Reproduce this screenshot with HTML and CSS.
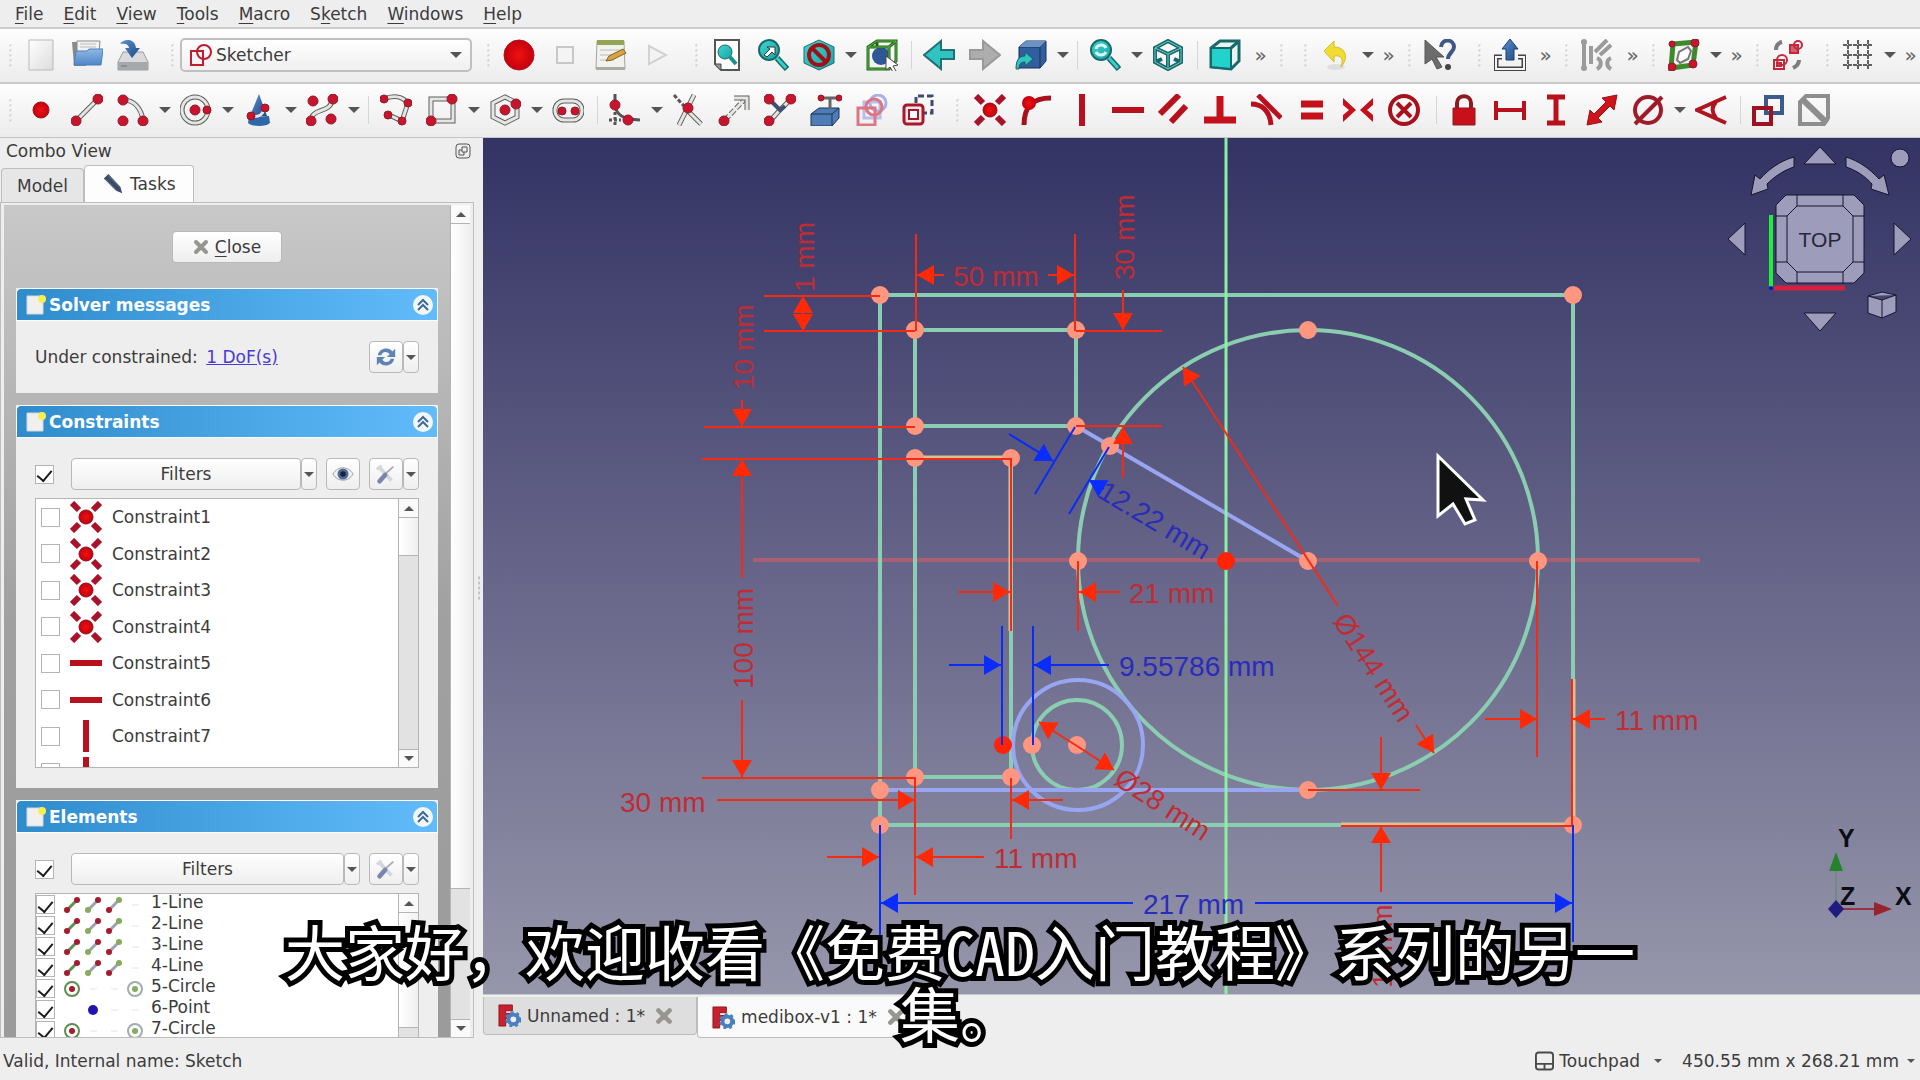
FILE: index.html
```html
<!DOCTYPE html>
<html lang="en">
<head>
    <meta charset="UTF-8">
    <meta name="viewport" content="width=device-width, initial-scale=1.0">
    <title>medibox-v1 - FreeCAD</title>
    <link rel="stylesheet" href="styles.css">
</head>
<body>
    <!-- shared icons -->
    <svg class="defs" width="0" height="0" aria-hidden="true">
        <defs>
            <linearGradient id="g-page" x1="0" y1="0" x2="1" y2="1"><stop offset="0" stop-color="#fff"/><stop offset="1" stop-color="#dcdcdc"/></linearGradient>
            <linearGradient id="g-folder" x1="0" y1="0" x2="0" y2="1"><stop offset="0" stop-color="#8fb9e6"/><stop offset="1" stop-color="#4f86c6"/></linearGradient>
            <linearGradient id="g-blue" x1="0" y1="0" x2="1" y2="1"><stop offset="0" stop-color="#5c8fd0"/><stop offset="1" stop-color="#1f4a86"/></linearGradient>
            <radialGradient id="g-red"><stop offset="0" stop-color="#ee1111"/><stop offset="1" stop-color="#c4000c"/></radialGradient>
            <linearGradient id="g-teal" x1="0" y1="0" x2="1" y2="1"><stop offset="0" stop-color="#3ed6d2"/><stop offset="1" stop-color="#1ba3a3"/></linearGradient>
            <symbol id="i-coincident" viewBox="0 0 32 32">
                <path d="M2 2l7 7M30 2l-7 7M2 30l7-7M30 30l-7-7" stroke="#a91228" stroke-width="6"/>
                <circle cx="16" cy="16" r="7" fill="url(#g-red)" stroke="#8c0f1c"/>
            </symbol>
            <symbol id="i-horizontal" viewBox="0 0 32 32"><path d="M0 16h32" stroke="#b8101c" stroke-width="6"/></symbol>
            <symbol id="i-vertical" viewBox="0 0 32 32"><path d="M16 0v32" stroke="#b8101c" stroke-width="6"/></symbol>
            <symbol id="i-line-edge" viewBox="0 0 16 16"><path d="M3 13L13 3" stroke="#5f8f52" stroke-width="3"/><circle class="r" cx="3" cy="13" r="3"/><circle class="r" cx="13" cy="3" r="3"/></symbol>
            <symbol id="i-line-start" viewBox="0 0 16 16"><path d="M3 13L13 3" stroke="#9aa3b0" stroke-width="3"/><circle class="g" cx="3" cy="13" r="3"/><circle class="r" cx="13" cy="3" r="3"/></symbol>
            <symbol id="i-line-end" viewBox="0 0 16 16"><path d="M3 13L13 3" stroke="#9aa3b0" stroke-width="3"/><circle class="r" cx="3" cy="13" r="3"/><circle class="g" cx="13" cy="3" r="3"/></symbol>
            <symbol id="i-circle-edge" viewBox="0 0 16 16"><circle cx="8" cy="8" r="7" fill="none" stroke="#5d8f50" stroke-width="2"/><circle class="r" cx="8" cy="8" r="3"/></symbol>
            <symbol id="i-circle-mid" viewBox="0 0 16 16"><circle cx="8" cy="8" r="7" fill="none" stroke="#a3acae" stroke-width="2"/><circle class="g" cx="8" cy="8" r="3"/></symbol>
            <symbol id="i-point" viewBox="0 0 16 16"><circle cx="8" cy="8" r="5" fill="#2015ae"/></symbol>
            <symbol id="i-dash" viewBox="0 0 16 16"><path d="M5 8h7" stroke="#e4e4e4"/></symbol>
            <symbol id="i-task" viewBox="0 0 20 20"><path d="M1 1h16v18H1z" fill="#f1f0ee" stroke="#cfd8dc"/><circle cx="16" cy="4" r="4" fill="#f6ee52"/></symbol>
            <symbol id="i-fold" viewBox="0 0 20 20"><circle cx="10" cy="10" r="10" fill="#f2f7fc"/><path d="M5 10l5-5 5 5M5 15l5-5 5 5" fill="none" stroke="#3f6a97" stroke-width="2"/></symbol>
            <symbol id="i-tools" viewBox="0 0 24 24"><path d="M4 4l14 15" stroke="#d3d6dc" stroke-width="4"/><path d="M20 4L10 13" stroke="#a5a9b1" stroke-width="2"/><path d="M11 13L5 20" stroke="#7885ae" stroke-width="5" stroke-linecap="round"/><path d="M2 7l5-4" stroke="#d3d6dc" stroke-width="3"/></symbol>
            <symbol id="i-x" viewBox="0 0 16 16"><path d="M3 3l10 10M13 3L3 13" stroke="#96968f" stroke-width="4" stroke-linecap="round"/></symbol>
            <symbol id="i-freecad" viewBox="0 0 24 24"><path d="M1 1h14v6H8v3h5v5H8v8H1z" fill="#c8202c" stroke="#8e1820"/><circle cx="16" cy="16" r="5" fill="#eeeeee" stroke="#4a80bf" stroke-width="4"/><circle cx="16" cy="16" r="7" fill="none" stroke="#4a80bf" stroke-width="3" stroke-dasharray="3 3"/></symbol>
            <marker id="m-red" viewBox="0 0 17 20" refX="17" refY="10" markerWidth="17" markerHeight="20" markerUnits="userSpaceOnUse" orient="auto"><path d="M0 0l17 10L0 20z" fill="#ff2a05"/></marker>
            <marker id="m-blue" viewBox="0 0 17 20" refX="17" refY="10" markerWidth="17" markerHeight="20" markerUnits="userSpaceOnUse" orient="auto"><path d="M0 0l17 10L0 20z" fill="#0a2cff"/></marker>
        </defs>
    </svg>

    <nav class="menu-bar">
        <button><u>F</u>ile</button>
        <button><u>E</u>dit</button>
        <button><u>V</u>iew</button>
        <button><u>T</u>ools</button>
        <button><u>M</u>acro</button>
        <button>S<u>k</u>etch</button>
        <button><u>W</u>indows</button>
        <button><u>H</u>elp</button>
    </nav>

    <div class="toolbar">
        <span class="grip"></span>
        <button class="tool" aria-label="New"><svg viewBox="0 0 32 32"><path d="M4 1h24v30H4z" fill="url(#g-page)" stroke="#b9b9b9"/></svg></button>
        <button class="tool" aria-label="Open"><svg viewBox="0 0 32 32"><path d="M1 3h12l2 3v21H3z" fill="#8a8a88"/><path d="M6 2h23l-1 14H6z" fill="#f2f2f2" stroke="#8a8a8a"/><path d="M9 5h16M9 8h16" stroke="#bbb"/><path d="M5 12h11l2-2h14l-2 16H3z" fill="url(#g-folder)" stroke="#4a7fbe"/></svg></button>
        <button class="tool" aria-label="Save"><svg viewBox="0 0 32 32"><path d="M6 13h20l5 10v8H1v-8z" fill="#d9dadc" stroke="#9a9b9d"/><path d="M1 23h30v8H1z" fill="#a6a8ac"/><path d="M4 27h6" stroke="#777"/><path d="M3 5c4-6 15-6 16 4h4l-8 10-7-10h4c0-4-5-5-9-4z" fill="url(#g-blue)"/></svg></button>
        <span class="gap"></span>
        <span class="grip"></span>
        <label class="workbench">
            <svg viewBox="0 0 24 24"><circle cx="15" cy="9" r="7"/><path d="M2 8h12v14H2z"/></svg>
            <select aria-label="Workbench"><option>Sketcher</option></select>
            <i class="caret"></i>
        </label>
        <span class="gap"></span>
        <span class="grip"></span>
        <button class="tool" aria-label="Record macro"><svg viewBox="0 0 32 32"><circle cx="16" cy="16" r="15" fill="url(#g-red)" stroke="#b3131b"/></svg></button>
        <button class="tool" aria-label="Stop"><svg viewBox="0 0 32 32"><path d="M8 8h16v16H8z" fill="#f4f4f4" stroke="#c8c8c8" stroke-width="2"/></svg></button>
        <button class="tool" aria-label="Macros"><svg viewBox="0 0 32 32"><path d="M2 2h27l1 28H1z" fill="#f1f1ee" stroke="#a5a5a0"/><path d="M2 1h27v5H2z" fill="#94a354"/><path d="M5 11h20M5 16h18M5 21h14" stroke="#bcbcbc"/><path d="M1 28h29v3H1z" fill="#aaa"/><path d="M11 22l3-5 14-7 3 4-14 7z" fill="#d9a441" stroke="#80602a"/></svg></button>
        <button class="tool" aria-label="Run macro"><svg viewBox="0 0 32 32"><path d="M8 7l17 9L8 25z" fill="#f3f3f3" stroke="#d2d2d2" stroke-width="2"/></svg></button>
        <span class="gap"></span>
        <span class="grip"></span>
        <button class="tool" aria-label="Fit all"><svg viewBox="0 0 32 32"><path d="M4 1h24v30H10l-6-6z" fill="#fff" stroke="#555" stroke-width="2"/><path d="M4 25h6v6" fill="#999" stroke="#444"/><circle cx="14" cy="13" r="7" fill="url(#g-teal)" stroke="#17696b"/><path d="M19 18l6 7" stroke="#1c8f90" stroke-width="4"/></svg></button>
        <button class="tool" aria-label="Fit selection"><svg viewBox="0 0 32 32"><circle cx="12" cy="11" r="10" fill="url(#g-teal)" stroke="#17696b" stroke-width="2"/><path d="M20 19l10 11" stroke="#17696b" stroke-width="6"/><path d="M20 19l9 10" stroke="#35cfca" stroke-width="3"/><path d="M7 16l6-6-3-2h8v8l-3-3-5 5z" fill="#fff" stroke="#333"/></svg></button>
        <button class="tool" aria-label="Draw style"><svg viewBox="0 0 32 32"><path d="M16 1l15 7v16l-15 7-15-7V8z" fill="url(#g-teal)" stroke="#1d6d6f"/><circle cx="16" cy="16" r="10" fill="none" stroke="#a01018" stroke-width="4"/><path d="M9 9l14 14" stroke="#a01018" stroke-width="4"/></svg></button>
        <button class="more" aria-label="More"><i class="caret"></i></button>
        <button class="tool" aria-label="Bounding box"><svg viewBox="0 0 32 32"><circle cx="15" cy="17" r="9" fill="#2f5697"/><path d="M2 8l9-6h19v20l-7 8H2zM2 8h21l7-6M23 8v22M11 2v5" fill="none" stroke="#24691b" stroke-width="3"/><path d="M2 8l9-6h19v20l-7 8H2zM2 8h21l7-6M23 8v22" fill="none" stroke="#5fb548" stroke-width="1"/><path d="M20 17l12 9-5 1 3 5-3 1-3-5-4 3z" fill="#fff" stroke="#444"/></svg></button>
        <span class="sep"></span>
        <button class="tool" aria-label="Back"><svg viewBox="0 0 32 32"><path d="M1 16L18 2v9h13v9H18v10z" fill="#2fc4c2" stroke="#256f73" stroke-width="2"/></svg></button>
        <button class="tool" aria-label="Forward"><svg viewBox="0 0 32 32"><path d="M31 16L14 2v9H1v9h13v10z" fill="#adadad" stroke="#999" stroke-width="2"/></svg></button>
        <button class="tool" aria-label="Linked object"><svg viewBox="0 0 32 32"><path d="M4 8l7-6h20v20l-6 7H4z" fill="#2f5f9f" stroke="#1d2f50"/><path d="M4 8h21l6-6M25 8v21" fill="none" stroke="#1d2f50"/><path d="M11 2h20l-6 6H4z" fill="#6b92c6"/><path d="M1 30c0-9 3-13 9-13v-4l8 7-8 7v-4c-4 0-6 2-6 7z" fill="#2fc4c2" stroke="#1c5f63"/></svg></button>
        <button class="more" aria-label="More"><i class="caret"></i></button>
        <span class="sep"></span>
        <button class="tool" aria-label="Zoom"><svg viewBox="0 0 32 32"><circle cx="12" cy="11" r="10" fill="url(#g-teal)" stroke="#17696b" stroke-width="2"/><path d="M20 19l10 11" stroke="#17696b" stroke-width="6"/><path d="M20 19l9 10" stroke="#35cfca" stroke-width="3"/><path d="M7 10c1-5 8-5 10-1M17 13c-2 4-8 4-10 0" fill="none" stroke="#d9f5f4" stroke-width="3"/></svg></button>
        <button class="more" aria-label="More"><i class="caret"></i></button>
        <button class="tool" aria-label="Isometric"><svg viewBox="0 0 32 32"><path d="M16 2l13 7v14l-13 7-13-7V9zM3 9l13 6 13-6M16 15v15M3 23l7-3M29 23l-7-3" fill="none" stroke="#17696b" stroke-width="4"/><path d="M16 2l13 7v14l-13 7-13-7V9zM3 9l13 6 13-6M16 15v15" fill="none" stroke="#6fc9c4" stroke-width="1"/></svg></button>
        <span class="sep"></span>
        <button class="tool" aria-label="Front"><svg viewBox="0 0 32 32"><path d="M2 9l9-7h19v20l-8 8-20-2z" fill="#e9f4f3" stroke="#17696b" stroke-width="3"/><path d="M2 9h20v21L2 28z" fill="#22d3cc" stroke="#17696b" stroke-width="2"/><path d="M22 9l8-7" stroke="#17696b" stroke-width="3"/></svg></button>
        <button class="ext" aria-label="More tools">»</button>
        <span class="grip"></span>
        <span class="gap"></span>
        <span class="grip"></span>
        <button class="tool" aria-label="Undo"><svg viewBox="0 0 32 32"><ellipse cx="16" cy="28" rx="9" ry="3" fill="#dedede"/><path d="M4 12L14 2v6c12 0 15 11 7 20 3-9 0-12-7-11v6z" fill="#f1dc32" stroke="#d3bd28"/></svg></button>
        <button class="more" aria-label="More"><i class="caret"></i></button>
        <button class="ext" aria-label="More tools">»</button>
        <span class="grip"></span>
        <button class="tool" aria-label="What's this"><svg viewBox="0 0 32 32"><path d="M1 1l19 17h-8l6 10-5 2-5-10-7 5z" fill="#6c6c6c" stroke="#555"/><path d="M17 8c1-9 13-8 13 0 0 5-6 6-6 12" fill="none" stroke="#3e5688" stroke-width="4"/><circle cx="24" cy="28" r="3" fill="#444"/></svg></button>
        <span class="gap"></span>
        <span class="grip"></span>
        <button class="tool" aria-label="Leave sketch"><svg viewBox="0 0 32 32"><path d="M8 18H2v12h28V18h-6" fill="none" stroke="#444" stroke-width="5"/><path d="M8 18H2v12h28V18h-6" fill="none" stroke="#f4f4f4" stroke-width="2"/><path d="M16 0l8 10h-4v11h-8V10H8z" fill="url(#g-blue)" stroke="#1d3f70"/></svg></button>
        <button class="ext" aria-label="More tools">»</button>
        <span class="grip"></span>
        <button class="tool" aria-label="Constraints"><svg viewBox="0 0 32 32"><g stroke="#9b9b9b" fill="none"><path d="M3 3v26" stroke-width="4"/><path d="M10 7v18" stroke-width="4"/><path d="M14 13L26 1M19 16L30 6M16 19c5 2 5 8 0 11M30 19c-5 2-5 8 0 11" stroke-width="4"/></g><circle cx="3" cy="3" r="3" fill="#9b9b9b"/><circle cx="3" cy="29" r="3" fill="#9b9b9b"/></svg></button>
        <button class="ext" aria-label="More tools">»</button>
        <span class="grip"></span>
        <button class="tool" aria-label="View section"><svg viewBox="0 0 32 32"><path d="M5 5l23-2-3 23-22 3z" fill="#f3f3f3" stroke="#3c8a2a" stroke-width="5"/><path d="M9 21l2-8 9-5 3 4-3 8-8 4z" fill="#fff" stroke="#777" stroke-width="2"/><g class="node"><circle cx="4" cy="5" r="3"/><circle cx="27" cy="4" r="4"/><circle cx="25" cy="25" r="4"/><circle cx="4" cy="28" r="4"/></g></svg></button>
        <button class="more" aria-label="More"><i class="caret"></i></button>
        <button class="ext" aria-label="More tools">»</button>
        <span class="grip"></span>
        <button class="tool" aria-label="Swap geometry"><svg viewBox="0 0 32 32"><g fill="none" stroke="#c5283c" stroke-width="2"><path d="M18 6h8v8h-8z" fill="#d8606e"/><circle cx="26" cy="6" r="4"/><path d="M2 21h10v9H2zM5 24h4v3H5z"/><circle cx="10" cy="21" r="5"/></g><path d="M4 11c0-4 2-7 6-8M27 21c0 4-2 6-6 8" fill="none" stroke="#7d7d7d" stroke-width="4"/></svg></button>
        <span class="gap"></span>
        <span class="grip"></span>
        <button class="tool" aria-label="Grid"><svg viewBox="0 0 32 32"><path d="M6 1v30M16 1v30M26 1v30M1 6h30M1 16h30M1 26h30" stroke="#606060" stroke-width="2" stroke-dasharray="4 1"/></svg></button>
        <button class="more" aria-label="More"><i class="caret"></i></button>
        <button class="ext" aria-label="More tools">»</button>
    </div>

    <div class="toolbar">
        <span class="grip"></span>
        <button class="tool" aria-label="Point"><svg viewBox="0 0 32 32"><circle cx="16" cy="16" r="8" fill="url(#g-red)" stroke="#a5121c"/></svg></button>
        <button class="tool" aria-label="Line"><svg viewBox="0 0 32 32"><path class="pipe" d="M5 27L27 5"/><path class="core" d="M5 27L27 5"/><g class="node"><circle cx="5" cy="27" r="5"/><circle cx="27" cy="5" r="5"/></g></svg></button>
        <button class="tool" aria-label="Arc"><svg viewBox="0 0 32 32"><path class="pipe" d="M6 6c11 0 18 8 20 20"/><path class="core" d="M6 6c11 0 18 8 20 20"/><g class="node"><circle cx="6" cy="6" r="5"/><circle cx="6" cy="27" r="5"/><circle cx="26" cy="27" r="5"/></g></svg></button>
        <button class="more" aria-label="More"><i class="caret"></i></button>
        <button class="tool" aria-label="Circle"><svg viewBox="0 0 32 32"><circle class="pipe" cx="15" cy="16" r="13"/><circle class="core" cx="15" cy="16" r="13"/><g class="node"><circle cx="15" cy="16" r="5"/><circle cx="27" cy="16" r="4"/></g></svg></button>
        <button class="more" aria-label="More"><i class="caret"></i></button>
        <button class="tool" aria-label="Conic"><svg viewBox="0 0 32 32"><path d="M16 0l8 22H7z" fill="url(#g-blue)"/><path d="M6 23l20-1 1 7c-4 4-18 4-22 0z" fill="#2d68a8"/><path d="M8 22c8 2 13-2 13-9" fill="none" stroke="#e6e6e6" stroke-width="3"/><g class="node"><circle cx="8" cy="22" r="4"/><circle cx="22" cy="14" r="4"/></g></svg></button>
        <button class="more" aria-label="More"><i class="caret"></i></button>
        <button class="tool" aria-label="B-spline"><svg viewBox="0 0 32 32"><path class="pipe" d="M5 27c0-14 21-7 21-22"/><path class="core" d="M5 27c0-14 21-7 21-22"/><g class="node"><circle cx="5" cy="27" r="5"/><circle cx="7" cy="7" r="5"/><circle cx="27" cy="5" r="5"/><circle cx="25" cy="25" r="5"/></g></svg></button>
        <button class="more" aria-label="More"><i class="caret"></i></button>
        <span class="sep"></span>
        <button class="tool" aria-label="Polyline"><svg viewBox="0 0 32 32"><path class="pipe" d="M4 5c9-4 18-3 24 4l-6 18-13-6"/><path class="core" d="M4 5c9-4 18-3 24 4l-6 18-13-6"/><g class="node"><circle cx="4" cy="5" r="4"/><circle cx="28" cy="9" r="4"/><circle cx="22" cy="27" r="4"/><circle cx="8" cy="21" r="4"/></g></svg></button>
        <button class="tool" aria-label="Rectangle"><svg viewBox="0 0 32 32"><path class="pipe" d="M5 5h22v22H5z"/><path class="core" d="M5 5h22v22H5z"/><g class="node"><circle cx="26" cy="5" r="5"/><circle cx="5" cy="27" r="5"/></g></svg></button>
        <button class="more" aria-label="More"><i class="caret"></i></button>
        <button class="tool" aria-label="Polygon"><svg viewBox="0 0 32 32"><path class="pipe" d="M16 3l12 6v14l-12 6-12-6V9z"/><path class="core" d="M16 3l12 6v14l-12 6-12-6V9z"/><g class="node"><circle cx="16" cy="16" r="5"/><circle cx="27" cy="10" r="5"/></g></svg></button>
        <button class="more" aria-label="More"><i class="caret"></i></button>
        <button class="tool" aria-label="Slot"><svg viewBox="0 0 32 32"><rect class="pipe" x="3" y="7" width="27" height="19" rx="9"/><rect class="core" x="3" y="7" width="27" height="19" rx="9"/><g class="node"><circle cx="10" cy="17" r="4"/><circle cx="23" cy="17" r="4"/></g></svg></button>
        <span class="sep"></span>
        <button class="tool" aria-label="Fillet"><svg viewBox="0 0 32 32"><path d="M6 0v12c2 9 7 13 25 14" fill="none" stroke="#555" stroke-width="3"/><path d="M6 18v13M0 26h12" stroke="#555" stroke-width="3" stroke-dasharray="3 2"/><g class="node"><circle cx="6" cy="11" r="5"/><circle cx="19" cy="26" r="5"/></g></svg></button>
        <button class="more" aria-label="More"><i class="caret"></i></button>
        <button class="tool" aria-label="Trim"><svg viewBox="0 0 32 32"><path class="pipe" d="M22 1L7 31M15 16l14 14"/><path class="core" d="M22 1L7 31M15 16l14 14"/><path d="M2 1l10 11" stroke="#555" stroke-width="3" stroke-dasharray="4 2"/><circle class="node" cx="16" cy="14" r="5"/></svg></button>
        <button class="tool" aria-label="Extend"><svg viewBox="0 0 32 32"><path d="M7 26L26 6" stroke="#666" stroke-width="5" stroke-dasharray="6 2"/><path class="core" d="M7 26L26 6"/><path class="pipe" d="M16 4h13v12"/><path class="core" d="M16 4h13v12"/><circle class="node" cx="6" cy="27" r="5"/></svg></button>
        <button class="tool" aria-label="Split"><svg viewBox="0 0 32 32"><path class="pipe" d="M6 27l9-10L27 5"/><path class="core" d="M6 27l9-10L27 5"/><path d="M6 6l10 10 5-4" fill="none" stroke="#405070" stroke-width="4"/><g class="node"><circle cx="5" cy="5" r="5"/><circle cx="27" cy="5" r="5"/><circle cx="5" cy="27" r="5"/></g></svg></button>
        <button class="tool" aria-label="External geometry"><svg viewBox="0 0 32 32"><path d="M1 20l8-6h20v10l-7 8H1z" fill="#4d7cb6" stroke="#1b3357"/><path d="M1 20h21l7-6M22 20v12" fill="none" stroke="#1b3357"/><path d="M10 4h20M20 4v11" stroke="#666" stroke-width="3"/><g class="node"><circle cx="11" cy="4" r="3"/><circle cx="29" cy="4" r="3"/></g></svg></button>
        <button class="tool" aria-label="Carbon copy"><svg viewBox="0 0 32 32"><g fill="none" stroke-width="3"><circle cx="22" cy="9" r="8" stroke="#aab0e8"/><path d="M8 8h16v16H8z" stroke="#b9bdec"/><circle cx="18" cy="13" r="8" stroke="#dc7685"/><path d="M2 14h17v17H2z" stroke="#dc7685"/></g></svg></button>
        <button class="tool" aria-label="Construction geometry"><svg viewBox="0 0 32 32"><path d="M14 9V2h16v17h-9" fill="none" stroke="#3c4a70" stroke-width="3" stroke-dasharray="6 3"/><rect x="2" y="11" width="19" height="19" rx="3" fill="#f7e9e9" stroke="#a8182a" stroke-width="3"/><rect x="7" y="16" width="9" height="9" fill="#fff" stroke="#a8182a" stroke-width="2"/></svg></button>
        <span class="gap"></span>
        <span class="grip"></span>
        <div class="tool-group">
            <button class="tool" aria-label="Coincident"><svg><use href="#i-coincident"/></svg></button>
            <button class="tool" aria-label="Point on object"><svg viewBox="0 0 32 32"><path d="M4 31C4 13 12 4 31 4" fill="none" stroke="#a8101c" stroke-width="5"/><circle cx="9" cy="9" r="7" fill="url(#g-red)"/></svg></button>
            <button class="tool" aria-label="Vertical"><svg><use href="#i-vertical"/></svg></button>
            <button class="tool" aria-label="Horizontal"><svg><use href="#i-horizontal"/></svg></button>
            <button class="tool" aria-label="Parallel"><svg viewBox="0 0 32 32"><path d="M2 20L21 1M13 28l15-16" stroke="#b8101c" stroke-width="6"/></svg></button>
            <button class="tool" aria-label="Perpendicular"><svg viewBox="0 0 32 32"><path d="M16 2v24M0 26h32" stroke="#c4101a" stroke-width="7"/></svg></button>
            <button class="tool" aria-label="Tangent"><svg viewBox="0 0 32 32"><path d="M8 1l23 23M1 10c10 0 19 6 20 21" fill="none" stroke="#b8101c" stroke-width="5"/></svg></button>
            <button class="tool" aria-label="Equal"><svg viewBox="0 0 32 32"><path d="M5 10h22M5 22h22" stroke="#c4101a" stroke-width="7"/></svg></button>
            <button class="tool" aria-label="Symmetric"><svg viewBox="0 0 32 32"><path d="M1 4l13 12L1 28v-7l6-5-6-5zM31 4L18 16l13 12v-7l-6-5 6-5z" fill="#c4101a"/></svg></button>
            <button class="tool" aria-label="Block"><svg viewBox="0 0 32 32"><circle cx="16" cy="16" r="14" fill="none" stroke="#a8101c" stroke-width="4"/><path d="M9 9l14 14M23 9L9 23" stroke="#a8101c" stroke-width="4"/></svg></button>
        </div>
        <span class="sep"></span>
        <button class="tool" aria-label="Lock"><svg viewBox="0 0 32 32"><path d="M9 16V9c0-9 14-9 14 0v7" fill="none" stroke="#8e1b22" stroke-width="4"/><path d="M5 14h22v17H5z" fill="#c8101a" stroke="#8e1b22"/></svg></button>
        <button class="tool" aria-label="Horizontal distance"><svg viewBox="0 0 32 32"><path d="M2 7v19M30 7v19M2 16h28" stroke="#b8101c" stroke-width="4"/></svg></button>
        <button class="tool" aria-label="Vertical distance"><svg viewBox="0 0 32 32"><path d="M7 3h18M7 29h18M16 3v26" stroke="#b8101c" stroke-width="5"/></svg></button>
        <button class="tool" aria-label="Distance"><svg viewBox="0 0 32 32"><path d="M31 1l-3 15-4-4-12 12 4 4-15 3 3-15 4 4L20 8l-4-4z" fill="#d0121a" stroke="#98121a"/></svg></button>
        <button class="tool" aria-label="Diameter"><svg viewBox="0 0 32 32"><circle cx="16" cy="16" r="13" fill="none" stroke="#a01b28" stroke-width="4"/><path d="M3 30L30 3" stroke="#a01b28" stroke-width="4"/></svg></button>
        <button class="more" aria-label="More"><i class="caret"></i></button>
        <button class="tool" aria-label="Angle"><svg viewBox="0 0 32 32"><path d="M31 3L2 16l29 13M21 8c-5 5-4 11 0 16" fill="none" stroke="#b0141f" stroke-width="4"/></svg></button>
        <span class="sep"></span>
        <button class="tool" aria-label="Toggle driving"><svg viewBox="0 0 32 32"><path d="M14 3h16v16H14z" fill="none" stroke="#3d5a8c" stroke-width="4"/><path d="M2 14h17v16H2z" fill="none" stroke="#9c1220" stroke-width="4"/></svg></button>
        <button class="tool" aria-label="Toggle active"><svg viewBox="0 0 32 32"><path d="M8 2h22v22l-4 6H2V8z" fill="none" stroke="#8e8e8e" stroke-width="4"/><path d="M4 5l25 24" stroke="#8e8e8e" stroke-width="6"/></svg></button>
    </div>

    <main class="work">
        <aside class="dock">
            <div class="dock-title">Combo View
                <button class="float-btn" aria-label="Float"><svg viewBox="0 0 16 16"><rect x="1" y="1" width="14" height="14" rx="3"/><path d="M7 4h5v5H7zM9 9v3H4V7h3"/></svg></button>
            </div>
            <div class="dock-tabs">
                <button class="dock-tab">Model</button>
                <button class="dock-tab active"><svg viewBox="0 0 24 24"><path d="M2 6l5-5 13 14 2 7-7-3z" fill="#3b4a66"/><path d="M4 7l13 13M7 3l13 13" stroke="#6a7994"/></svg>Tasks</button>
            </div>
            <div class="dock-frame">
                <div class="task-area">
                    <button class="push close-btn"><svg><use href="#i-x"/></svg><span><u>C</u>lose</span></button>

                    <section class="task">
                        <h2><svg><use href="#i-task"/></svg>Solver messages<button class="fold" aria-label="Collapse"><svg><use href="#i-fold"/></svg></button></h2>
                        <div class="task-body solver">
                            <p>Under constrained: <a href="#dof">1 DoF(s)</a></p>
                            <div class="split">
                                <button class="push icon" aria-label="Update"><svg viewBox="0 0 24 24"><path d="M3 10C5 1 16 1 19 6l3-3v9h-9l3-3c-3-4-8-3-9 1zM21 14c-2 9-13 9-16 4l-3 3v-9h9l-3 3c3 4 8 3 9-1z" fill="#5f83b5"/></svg></button>
                                <button class="push arrow" aria-label="Update options"><i class="caret"></i></button>
                            </div>
                        </div>
                    </section>

                    <section class="task">
                        <h2><svg><use href="#i-task"/></svg>Constraints<button class="fold" aria-label="Collapse"><svg><use href="#i-fold"/></svg></button></h2>
                        <div class="task-body">
                            <div class="filter-row">
                                <input type="checkbox" aria-label="Filter constraints" checked>
                                <div class="split wide">
                                    <button class="push">Filters</button>
                                    <button class="push arrow" aria-label="Filter options"><i class="caret"></i></button>
                                </div>
                                <button class="push icon" aria-label="Show"><svg viewBox="0 0 24 24"><path d="M1 12c5-9 17-9 22 0-5 9-17 9-22 0z" fill="#eef1f6" stroke="#999"/><circle cx="12" cy="12" r="6" fill="#506a94"/><circle cx="12" cy="12" r="3" fill="#13233f"/></svg></button>
                                <div class="split">
                                    <button class="push icon" aria-label="Settings"><svg><use href="#i-tools"/></svg></button>
                                    <button class="push arrow" aria-label="Settings options"><i class="caret"></i></button>
                                </div>
                            </div>
                            <div class="list constraints">
                                <ul>
                                    <li><label><input type="checkbox"><svg><use href="#i-coincident"/></svg>Constraint1</label></li>
                                    <li><label><input type="checkbox"><svg><use href="#i-coincident"/></svg>Constraint2</label></li>
                                    <li><label><input type="checkbox"><svg><use href="#i-coincident"/></svg>Constraint3</label></li>
                                    <li><label><input type="checkbox"><svg><use href="#i-coincident"/></svg>Constraint4</label></li>
                                    <li><label><input type="checkbox"><svg><use href="#i-horizontal"/></svg>Constraint5</label></li>
                                    <li><label><input type="checkbox"><svg><use href="#i-horizontal"/></svg>Constraint6</label></li>
                                    <li><label><input type="checkbox"><svg><use href="#i-vertical"/></svg>Constraint7</label></li>
                                    <li><label><input type="checkbox" aria-label="Next constraint"><svg><use href="#i-vertical"/></svg></label></li>
                                </ul>
                                <div class="scroll"><i class="up"></i><b></b><i class="down"></i></div>
                            </div>
                        </div>
                    </section>

                    <section class="task">
                        <h2><svg><use href="#i-task"/></svg>Elements<button class="fold" aria-label="Collapse"><svg><use href="#i-fold"/></svg></button></h2>
                        <div class="task-body">
                            <div class="filter-row">
                                <input type="checkbox" aria-label="Filter elements" checked>
                                <div class="split wide">
                                    <button class="push">Filters</button>
                                    <button class="push arrow" aria-label="Filter options"><i class="caret"></i></button>
                                </div>
                                <div class="split">
                                    <button class="push icon" aria-label="Settings"><svg><use href="#i-tools"/></svg></button>
                                    <button class="push arrow" aria-label="Settings options"><i class="caret"></i></button>
                                </div>
                            </div>
                            <div class="list elements">
                                <ul>
                                    <li><label><input type="checkbox" checked><svg><use href="#i-line-edge"/></svg><svg><use href="#i-line-start"/></svg><svg><use href="#i-line-end"/></svg><svg><use href="#i-dash"/></svg><span>1-Line</span></label></li>
                                    <li><label><input type="checkbox" checked><svg><use href="#i-line-edge"/></svg><svg><use href="#i-line-start"/></svg><svg><use href="#i-line-end"/></svg><svg><use href="#i-dash"/></svg><span>2-Line</span></label></li>
                                    <li><label><input type="checkbox" checked><svg><use href="#i-line-edge"/></svg><svg><use href="#i-line-start"/></svg><svg><use href="#i-line-end"/></svg><svg><use href="#i-dash"/></svg><span>3-Line</span></label></li>
                                    <li><label><input type="checkbox" checked><svg><use href="#i-line-edge"/></svg><svg><use href="#i-line-start"/></svg><svg><use href="#i-line-end"/></svg><svg><use href="#i-dash"/></svg><span>4-Line</span></label></li>
                                    <li><label><input type="checkbox" checked><svg><use href="#i-circle-edge"/></svg><svg><use href="#i-dash"/></svg><svg><use href="#i-dash"/></svg><svg><use href="#i-circle-mid"/></svg><span>5-Circle</span></label></li>
                                    <li><label><input type="checkbox" checked><svg></svg><svg><use href="#i-point"/></svg><svg><use href="#i-dash"/></svg><svg><use href="#i-dash"/></svg><span>6-Point</span></label></li>
                                    <li><label><input type="checkbox" checked><svg><use href="#i-circle-edge"/></svg><svg><use href="#i-dash"/></svg><svg><use href="#i-dash"/></svg><svg><use href="#i-circle-mid"/></svg><span>7-Circle</span></label></li>
                                </ul>
                                <div class="scroll"><i class="up"></i><b></b></div>
                            </div>
                        </div>
                    </section>
                </div>
                <div class="scroll outer"><i class="up"></i><b></b><i class="down"></i></div>
            </div>
        </aside>

        <div class="splitter"><span></span></div>

        <section class="view">
            <div class="canvas">
                <svg class="sketch" viewBox="483 138 1437 856">
                    <!-- axes -->
                    <path d="M753 560H1700" stroke="#a85f72" stroke-width="4"/>

                    <!-- geometry -->
                    <g class="geo">
                        <path d="M880 295H1573V825H880z"/>
                        <path d="M915 330H1076V426H915z"/>
                        <path d="M915 458H1011V777H915z"/>
                        <circle cx="1308" cy="560" r="230"/>
                        <circle cx="1077" cy="745" r="45"/>
                    </g>
                    <g class="construction">
                        <path d="M1076 426L1308 561M880 790H1308"/>
                        <circle cx="1078" cy="745" r="65"/>
                    </g>
                    <path d="M1226 138V994" stroke="#8df0a0" stroke-width="3"/>
                    <path d="M915 457H1010V631M1574 679V824H1341" fill="none" stroke="#d6c294" stroke-width="3"/>

                    <g class="points">
                        <circle cx="880" cy="295" r="9"/><circle cx="1573" cy="295" r="9"/>
                        <circle cx="880" cy="825" r="9"/><circle cx="1573" cy="825" r="9"/>
                        <circle cx="880" cy="790" r="9"/><circle cx="1308" cy="790" r="9"/>
                        <circle cx="915" cy="330" r="9"/><circle cx="1076" cy="330" r="9"/>
                        <circle cx="915" cy="426" r="9"/><circle cx="1076" cy="426" r="9"/>
                        <circle cx="915" cy="458" r="9"/><circle cx="1011" cy="458" r="9"/>
                        <circle cx="915" cy="777" r="9"/><circle cx="1011" cy="777" r="9"/>
                        <circle cx="1110" cy="446" r="9"/><circle cx="1308" cy="330" r="9"/>
                        <circle cx="1078" cy="561" r="9"/><circle cx="1538" cy="561" r="9"/>
                        <circle cx="1308" cy="561" r="9"/><circle cx="1077" cy="745" r="9"/>
                        <circle cx="1032" cy="745" r="9"/>
                        <circle class="fixed" cx="1226" cy="561" r="9"/><circle class="fixed" cx="1003" cy="745" r="9"/>
                    </g>

                    <!-- driving dimensions -->
                    <g class="dim">
                        <path d="M916 234V331M1075 234V331M1076 331H1162M1076 426H1162M764 296H880M764 331H915M704 427H915M702 459H1011V631M702 778H915V895M1011 778V839M1078 561V631M1537 561V757M1572 679V826H1341M1308 790H1420"/>
                        <g marker-end="url(#m-red)">
                            <path d="M944 275H917"/><path d="M1048 275H1074"/>
                            <path d="M1123 290V330"/><path d="M1123 478V427"/>
                            <path d="M803 318V296"/><path d="M803 310V331"/>
                            <path d="M742 400V426"/><path d="M742 578V459"/><path d="M742 700V777"/>
                            <path d="M958 592H1010"/><path d="M1120 592H1079"/>
                            <path d="M717 800H915"/><path d="M1063 800H1012"/>
                            <path d="M827 857H879"/><path d="M984 857H916"/>
                            <path d="M1485 719H1537"/><path d="M1605 719H1573"/>
                            <path d="M1381 737V790"/><path d="M1381 892V826"/>
                            <path d="M1338 606L1183 367"/><path d="M1416 725L1434 753"/>
                            <path d="M1077 746L1039 722"/><path d="M1077 746L1114 770"/>
                        </g>
                        <g class="label">
                            <text x="953" y="286">50 mm</text>
                            <text x="1129" y="603">21 mm</text>
                            <text x="620" y="812">30 mm</text>
                            <text x="994" y="868">11 mm</text>
                            <text x="1615" y="730">11 mm</text>
                            <text transform="translate(1134 280) rotate(-90)">30 mm</text>
                            <text transform="translate(814 292) rotate(-90)">1 mm</text>
                            <text transform="translate(753 390) rotate(-90)">10 mm</text>
                            <text transform="translate(753 689) rotate(-90)">100 mm</text>
                            <text transform="translate(1392 988) rotate(-90)">11 mm</text>
                            <text class="mid" transform="translate(1374 667) rotate(57)" y="10">Ø144 mm</text>
                            <text class="mid" transform="translate(1163 804) rotate(33)" y="10">Ø28 mm</text>
                        </g>
                    </g>

                    <!-- reference dimensions -->
                    <g class="dim ref">
                        <path d="M1002 626V745M1033 626V745M880 825V943M1573 825V942M1075 427L1035 494M1109 447L1069 514"/>
                        <g marker-end="url(#m-blue)">
                            <path d="M949 665H1001"/><path d="M1109 665H1034"/>
                            <path d="M1133 903H881"/><path d="M1255 903H1572"/>
                            <path d="M1009 434L1053 461"/><path d="M1104 489L1089 480"/>
                        </g>
                        <g class="label">
                            <text x="1119" y="676">9.55786 mm</text>
                            <text x="1143" y="914">217 mm</text>
                            <text class="mid" transform="translate(1155 520) rotate(31)" y="10">12.22 mm</text>
                        </g>
                    </g>

                    <path d="M1438 456v60l15-12 12 20 10-4-9-21 17 1z" fill="#111" stroke="#fff" stroke-width="3"/>
                </svg>

                <svg class="nav-cube" viewBox="0 3 220 220">
                    <g fill="#9d9dbb" stroke="#15152c">
                        <path d="M86 60h68l10 10v68l-10 10H86l-10-10V70z"/>
                        <path d="M97 71h46l10 10v46l-10 10H97l-10-10V81z"/>
                        <path d="M97 60v11M143 60v11M153 81h11M153 127h11M76 81h11M76 127h11M97 137v11M143 137v11"/>
                        <path d="M120 12l16 17h-32zM28 104l17-16v32zM211 104l-17-16v32zM120 196l-16-18h32z"/>
                        <path d="M94 22v10c-10 3-20 10-27 17l1 5-17 6 4-20 5 4c9-10 20-18 34-22z"/>
                        <path d="M146 22v10c10 3 20 10 26 17l-1 5 18 6-5-20-5 4c-9-10-20-18-33-22z"/>
                        <circle cx="200" cy="23" r="9"/>
                        <path d="M168 161l14-4 14 3v17l-14 6-14-5zM168 161l14 4 14-5M182 165v18"/>
                    </g>
                    <path d="M71 80v72" stroke="#1fee3a" stroke-width="4"/>
                    <path d="M74 153h71" stroke="#d4213f" stroke-width="5"/>
                    <circle cx="71" cy="153" r="2" fill="#1010d0"/>
                    <text x="120" y="112" text-anchor="middle">TOP</text>
                </svg>

                <svg class="axis-cross" viewBox="1820 820 100 120">
                    <path d="M1836 909v-44" stroke="#5a8a66"/><path d="M1836 909h40" stroke="#963242" stroke-width="2"/>
                    <path d="M1836 852l7 19h-14z" fill="#24832c"/>
                    <path d="M1892 909l-18-7v14z" fill="#98242f"/>
                    <path d="M1836 900l8 9-8 9-8-9z" fill="#201c80"/>
                    <text x="1838" y="847">Y</text><text x="1840" y="905">Z</text><text x="1895" y="905">X</text>
                </svg>
            </div>

            <div class="doc-tabs">
                <div class="doc-tab"><svg><use href="#i-freecad"/></svg><span>Unnamed : 1*</span><button aria-label="Close tab"><svg><use href="#i-x"/></svg></button></div>
                <div class="doc-tab active"><svg><use href="#i-freecad"/></svg><span>medibox-v1 : 1*</span><button aria-label="Close tab"><svg><use href="#i-x"/></svg></button></div>
            </div>
        </section>
    </main>

    <footer class="status-bar">
        <span class="message">Valid, Internal name: Sketch</span>
        <button class="nav-style"><svg viewBox="0 0 20 20"><rect x="1" y="1" width="18" height="18" rx="3"/><path d="M1 13h18M10 13v6"/></svg>Touchpad<i class="caret"></i></button>
        <button class="size">450.55 mm x 268.21 mm<i class="caret"></i></button>
    </footer>

    <p class="subtitle" lang="zh">大家好，欢迎收看《免费CAD入门教程》系列的另一<br>集。</p>
</body>
</html>
```

FILE: styles.css
```css
* {
    box-sizing: border-box;
}

body {
    margin: 0;
    height: 100vh;
    display: flex;
    flex-direction: column;
    overflow: hidden;
    background-color: #eeeeee;
    color: #3c3c3c;
    font-family: "DejaVu Sans", sans-serif;
    font-size: 17px;
}

button, select, input {
    font: inherit;
    color: inherit;
    margin: 0;
    padding: 0;
    border: none;
    background: none;
}

svg {
    display: block;
    flex: none;
}

.defs {
    position: absolute;
}

.caret {
    display: block;
    border: 6px solid transparent;
    border-top-color: #555;
    border-bottom: none;
}

/* menu */
.menu-bar {
    display: flex;
    gap: 20px;
    height: 27px;
    padding: 0 15px;
    flex: none;
}

.menu-bar button, .close-btn {
    text-underline-offset: 3px;
}

/* toolbars */
.toolbar {
    display: flex;
    flex: none;
    align-items: center;
    height: 55px;
    padding: 0 0 2px 2px;
    overflow: hidden;
    border-top: 2px solid #cbcbcb;
    background: linear-gradient(#fdfdfd, #ececec);
}

.toolbar > *, .tool-group > * {
    flex: none;
}

.grip {
    width: 16px;
    height: 24px;
    background: radial-gradient(#c4c4c4 1px, transparent 1px) center / 5px 5px;
    background-clip: content-box;
    padding: 0 5px;
}

.gap {
    width: 8px;
}

.sep {
    width: 11px;
    height: 28px;
    border-right: 1px solid #d6d6d6;
    margin: 0 4px 0 -4px;
}

.tool {
    width: 46px;
    height: 46px;
    display: flex;
    align-items: center;
    justify-content: center;
}

.tool svg {
    width: 32px;
    height: 32px;
}

.tool-group {
    display: flex;
    padding: 0 3px 0 2px;
}

.more {
    width: 17px;
    display: flex;
    justify-content: center;
}

.ext {
    width: 25px;
    font-size: 20px;
    color: #666;
}

.pipe {
    fill: none;
    stroke: #606060;
    stroke-width: 5;
}

.core {
    fill: none;
    stroke: #e4e6e2;
    stroke-width: 3;
}

.node {
    fill: #c8142c;
    stroke: #94182a;
}

.workbench {
    width: 292px;
    height: 34px;
    display: flex;
    align-items: center;
    padding: 0 8px 0 7px;
    border: 2px solid #c0c0c0;
    border-radius: 5px;
    background: linear-gradient(#ffffff, #f0f0f0);
}

.workbench svg {
    width: 24px;
    height: 24px;
    fill: none;
    stroke: #c01c2e;
    stroke-width: 2;
}

.workbench select {
    flex: 1;
    appearance: none;
    padding-left: 3px;
}

/* combo view */
.work {
    flex: 1;
    min-height: 0;
    display: flex;
    border-top: 1px solid #c4c4c4;
}

.dock {
    flex: 0 0 474px;
    display: flex;
    flex-direction: column;
    min-height: 0;
}

.dock-title {
    display: flex;
    justify-content: space-between;
    align-items: center;
    height: 26px;
    padding: 0 3px 0 6px;
}

.float-btn svg {
    width: 16px;
    height: 16px;
    fill: none;
    stroke: #555;
}

.dock-tabs {
    display: flex;
    align-items: flex-end;
    height: 38px;
    padding-left: 1px;
}

.dock-tab {
    height: 34px;
    padding: 0 15px;
    border: 1px solid #bdbdbd;
    border-bottom: none;
    border-radius: 4px 4px 0 0;
    background-color: #e6e6e6;
}

.dock-tab.active {
    height: 37px;
    display: flex;
    align-items: center;
    gap: 6px;
    padding: 0 17px;
    background-color: #fdfdfd;
}

.dock-tab svg {
    width: 22px;
    height: 22px;
}

.dock-frame {
    flex: 1;
    min-height: 0;
    display: flex;
    padding: 2px 3px 0;
    border: 1px solid #bdbdbd;
}

.task-area {
    flex: 1;
    min-width: 0;
    display: flex;
    flex-direction: column;
    gap: 12px;
    padding: 26px 12px 0;
    overflow: hidden;
    background: linear-gradient(#c8c8c8, #a0a0a0 50%, #9b9b9b);
}

.push {
    height: 32px;
    border: 1px solid #b9b9b9;
    border-radius: 4px;
    background: linear-gradient(#ffffff, #eeeeee);
}

.close-btn {
    display: flex;
    align-items: center;
    justify-content: center;
    gap: 6px;
    align-self: center;
    width: 110px;
    margin-bottom: 13px;
    flex: none;
}

.close-btn svg {
    width: 16px;
    height: 16px;
}

.task {
    flex: none;
    background-color: #eeeeee;
}

.task h2 {
    display: flex;
    align-items: center;
    gap: 3px;
    height: 33px;
    margin: 0;
    padding: 0 4px 0 9px;
    border: 1px solid #ffffff;
    border-radius: 5px 5px 0 0;
    background: linear-gradient(to right, #2f8ccc, #62bcfb);
    color: #ffffff;
    font-size: 17px;
}

.task h2 svg {
    width: 20px;
    height: 20px;
}

.fold {
    margin-left: auto;
}

.task-body {
    padding: 20px 19px 20px 19px;
}

.solver {
    display: flex;
    justify-content: space-between;
}

.solver p {
    margin: 0;
    line-height: 32px;
}

.solver a {
    color: #4a3ad6;
    margin-left: 3px;
}

.split {
    display: flex;
}

.split.wide {
    flex: 1;
    margin-left: 8px;
}

.split.wide .push:first-child {
    flex: 1;
}

.push.icon {
    width: 34px;
    display: flex;
    align-items: center;
    justify-content: center;
}

.push.icon svg {
    width: 22px;
    height: 22px;
}

.push.arrow {
    width: 16px;
    display: flex;
    align-items: center;
    justify-content: center;
}

.push.arrow .caret {
    border-width: 5px;
    border-bottom: none;
}

.filter-row {
    display: flex;
    align-items: center;
    gap: 9px;
}

input[type="checkbox"] {
    appearance: none;
    flex: none;
    display: grid;
    place-items: center;
    width: 19px;
    height: 19px;
    border: 1px solid #b4b4b4;
    background-color: #ffffff;
}

input[type="checkbox"]:checked::after {
    content: "";
    width: 7px;
    height: 12px;
    border: solid #1c1c1c;
    border-width: 0 2px 2px 0;
    transform: rotate(40deg);
}

.list {
    display: flex;
    margin-top: 8px;
    border: 1px solid #b4b4b4;
    background-color: #ffffff;
    overflow: hidden;
}

.list ul {
    flex: 1;
    margin: 0;
    padding: 0;
    list-style: none;
}

.list label {
    display: flex;
    align-items: center;
}

.constraints {
    height: 270px;
}

.constraints ul {
    display: grid;
    grid-auto-rows: 1fr;
    margin-bottom: -24px;
}

.constraints label {
    gap: 10px;
    height: 100%;
    padding-left: 5px;
}

.constraints label svg {
    width: 32px;
    height: 32px;
}

.elements {
    height: 160px;
}

.elements label {
    height: 21px;
    gap: 5px;
}

.elements label svg {
    width: 16px;
    height: 16px;
}

.elements input + svg {
    margin-left: 4px;
}

.elements span {
    margin-left: 3px;
    line-height: 17px;
    align-self: flex-start;
}

.r {
    fill: #a51c2e;
}

.g {
    fill: #86ab5c;
}

/* scroll bars */
.scroll {
    width: 20px;
    display: flex;
    flex-direction: column;
    background-color: #e2e2e2;
    border-left: 1px solid #b4b4b4;
}

.scroll i {
    height: 18px;
    display: grid;
    place-items: center;
    background-color: #fafafa;
}

.scroll i::after {
    content: "";
    border: 5px solid transparent;
}

.scroll .up::after {
    border-bottom-color: #555;
    border-top: none;
}

.scroll .down {
    margin-top: auto;
    border-top: 1px solid #b4b4b4;
}

.scroll .down::after {
    border-top-color: #555;
    border-bottom: none;
}

.scroll b {
    height: 39px;
    border: solid #b4b4b4;
    border-width: 1px 0;
    background: linear-gradient(to right, #ffffff, #f0f0f0);
}

.elements .scroll b {
    height: 116px;
}

.scroll.outer b {
    height: 80%;
}

.splitter {
    flex: 0 0 9px;
    display: flex;
    align-items: center;
    justify-content: center;
}

.splitter span {
    width: 4px;
    height: 24px;
    background: radial-gradient(#c4c4c4 1px, transparent 1px) center / 4px 5px;
}

/* 3D view */
.view {
    flex: 1;
    min-width: 0;
    display: flex;
    flex-direction: column;
}

.canvas {
    position: relative;
    flex: 1;
    min-height: 0;
    background: linear-gradient(#333364, #666488 50%, #9696ab);
}

.sketch {
    width: 100%;
    height: 100%;
}

.geo {
    fill: none;
    stroke: #8bcdb0;
    stroke-width: 4;
}

.construction {
    fill: none;
    stroke: #98a6f2;
    stroke-width: 4;
}

.points {
    fill: #ff9780;
}

.points .fixed {
    fill: #ff2408;
}

.dim {
    fill: none;
    stroke: #f42a14;
    stroke-width: 2;
}

.dim.ref {
    stroke: #0a2cf4;
}

.label {
    font-family: "Liberation Sans", Arial, sans-serif;
    font-size: 28px;
    stroke: none;
    fill: #c02c34;
}

.ref .label {
    fill: #2a2cba;
}

.mid {
    text-anchor: middle;
}

.nav-cube {
    position: absolute;
    top: 0;
    right: 0;
    width: 220px;
    height: 220px;
    font-family: "Liberation Sans", Arial, sans-serif;
    font-size: 21px;
    fill: #26263a;
}

.axis-cross {
    position: absolute;
    right: 0;
    bottom: 54px;
    width: 100px;
    height: 120px;
    font-family: "Liberation Sans", Arial, sans-serif;
    font-size: 25px;
    font-weight: bold;
    fill: #0c0c14;
}

.doc-tabs {
    display: flex;
    align-items: flex-start;
    height: 44px;
    padding-top: 2px;
    border-top: 1px solid #c8c8d0;
}

.doc-tab {
    display: flex;
    align-items: center;
    height: 38px;
    padding: 0 23px 0 14px;
    border: 1px solid #bdbdbd;
    border-top: none;
    border-radius: 0 0 4px 4px;
    background-color: #dedede;
}

.doc-tab.active {
    height: 41px;
    background-color: #fafafa;
}

.doc-tab > svg {
    width: 23px;
    height: 23px;
    margin-right: 6px;
}

.doc-tab button svg {
    width: 18px;
    height: 18px;
    margin-left: 10px;
}

/* status bar */
.status-bar {
    flex: none;
    display: flex;
    align-items: center;
    height: 42px;
    padding: 4px 5px 0 3px;
}

.message {
    flex: 1;
}

.status-bar button {
    display: flex;
    align-items: center;
}

.nav-style {
    margin-right: 20px;
}

.nav-style svg {
    width: 19px;
    height: 20px;
    margin-right: 5px;
    fill: none;
    stroke: #4a4a4a;
    stroke-width: 2;
}

.status-bar .caret {
    border-width: 4px;
    border-bottom: none;
    margin-left: 14px;
}

.status-bar .size .caret {
    margin-left: 8px;
}

/* video subtitle over the window */
.subtitle {
    position: absolute;
    left: 0;
    right: 0;
    bottom: 37px;
    margin: 0;
    text-align: center;
    font-family: "Noto Sans Mono CJK SC", "Noto Sans CJK SC", sans-serif;
    font-size: 60px;
    line-height: 62px;
    color: #ffffff;
    -webkit-text-stroke: 10px #000000;
    paint-order: stroke fill;
    stroke-linejoin: round;
    pointer-events: none;
}
```
